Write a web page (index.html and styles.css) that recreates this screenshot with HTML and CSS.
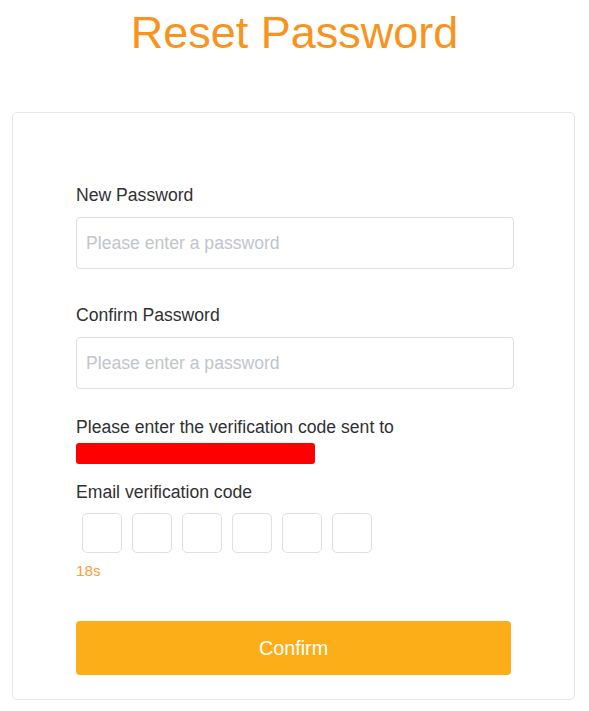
FILE: index.html
```html
<!DOCTYPE html>
<html lang="en">
<head>
<meta charset="utf-8">
<title>Reset Password</title>
<link rel="stylesheet" href="styles.css">
</head>
<body>
<h1 class="title">Reset Password</h1>
<div class="card">
  <div class="field">
    <label class="label" for="pw1">New Password</label>
    <input class="input" id="pw1" type="password" placeholder="Please enter a password">
  </div>
  <div class="field">
    <label class="label" for="pw2">Confirm Password</label>
    <input class="input" id="pw2" type="password" placeholder="Please enter a password">
  </div>
  <p class="hint">Please enter the verification code sent to</p>
  <div class="redacted"></div>
  <p class="label code-label">Email verification code</p>
  <div class="codes">
    <input class="code" maxlength="1">
    <input class="code" maxlength="1">
    <input class="code" maxlength="1">
    <input class="code" maxlength="1">
    <input class="code" maxlength="1">
    <input class="code" maxlength="1">
  </div>
  <p class="timer">18s</p>
  <button class="btn" type="button">Confirm</button>
</div>
</body>
</html>
```
FILE: styles.css
```css
* { box-sizing: border-box; }
body {
  margin: 0;
  background: #fff;
  font-family: "Liberation Sans", Arial, sans-serif;
  color: #303133;
}
.title {
  margin: 7px 0 53px;
  font-size: 45px;
  line-height: 52px;
  font-weight: 400;
  color: #f7941e;
  text-align: center;
}
.card {
  margin: 0 14px 0 12px;
  border: 1px solid #e6e6e6;
  border-radius: 5px;
  padding: 70px 60px 24px 63px;
}
.field { margin-bottom: 34px; }
.label {
  display: block;
  margin: 0 0 10px;
  font-size: 17.6px;
  line-height: 24px;
  color: #303133;
}
.input {
  display: block;
  width: 100%;
  height: 52px;
  border: 1px solid #dcdfe6;
  border-radius: 4px;
  padding: 0 9px;
  font-family: inherit;
  font-size: 17.6px;
  color: #303133;
  outline: none;
}
.input::placeholder { color: #c0c4cc; }
.hint {
  margin: -8px 0 0;
  font-size: 17.6px;
  line-height: 24px;
  color: #303133;
}
.redacted {
  margin-top: 4px;
  width: 239px;
  height: 21px;
  background: #ff0000;
  border-radius: 3px;
}
.code-label { margin: 16px 0 9px; }
.codes {
  display: flex;
  gap: 10px;
  padding-left: 6px;
}
.code {
  width: 40px;
  height: 40px;
  border: 1px solid #dcdfe6;
  border-radius: 5px;
  text-align: center;
  font-family: inherit;
  font-size: 18px;
  outline: none;
}
.timer {
  margin: 8px 0 0;
  font-size: 15.4px;
  line-height: 20px;
  color: #f8a035;
}
.btn {
  display: flex;
  align-items: center;
  justify-content: center;
  margin-top: 40px;
  width: 435px;
  height: 54px;
  border: none;
  border-radius: 4px;
  background: #fbae17;
  color: #fff;
  font-family: inherit;
  font-size: 19.8px;
  cursor: pointer;
}
```
